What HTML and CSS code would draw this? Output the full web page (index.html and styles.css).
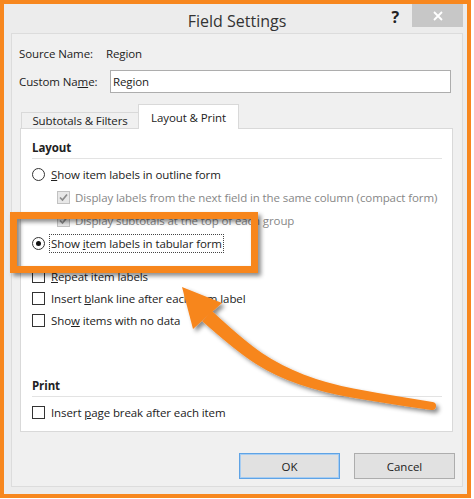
FILE: index.html
```html
<!DOCTYPE html>
<html>
<head>
<meta charset="utf-8">
<title>Field Settings</title>
<link rel="stylesheet" href="styles.css">
</head>
<body>
<div class="frame">
  <div class="titlebar">
    <div class="tb-left"></div>
    <div class="title">Field Settings</div>
    <div class="tb-right">
      <span class="help">?</span>
      <span class="close"><svg width="12" height="12" viewBox="0 0 12 12"><path d="M2 2 L10 10 M10 2 L2 10" stroke="#fff" stroke-width="1.8" fill="none"/></svg></span>
    </div>
  </div>
  <div class="client">
    <div class="row-source"><span class="lbl">Source Name:</span><span>Region</span></div>
    <div class="row-custom"><span class="lbl">Custom Na<u>m</u>e:</span><div class="input">Region</div></div>
    <div class="tabs">
      <div class="tab">Subtotals &amp; Filters</div>
      <div class="tab active">Layout &amp; Print</div>
    </div>
    <div class="panel">
      <div class="section-h">Layout</div>
      <div class="group group-a">
        <div class="opt"><span class="radio"></span><span><u>S</u>how item labels in outline form</span></div>
        <div class="opt indent disabled"><span class="check checked"><svg width="11" height="11" viewBox="0 0 11 11"><path d="M2 5.5 L4.5 8 L9 2.5" stroke="#8c8c8c" stroke-width="1.7" fill="none"/></svg></span><span>Display labels from the next field in the same column (compact form)</span></div>
        <div class="opt indent disabled"><span class="check checked"><svg width="11" height="11" viewBox="0 0 11 11"><path d="M2 5.5 L4.5 8 L9 2.5" stroke="#8c8c8c" stroke-width="1.7" fill="none"/></svg></span><span>Display subtotals at the top of each group</span></div>
        <div class="opt"><span class="radio on"></span><span class="focus">Show <u>i</u>tem labels in tabular form</span></div>
      </div>
      <div class="group group-b">
        <div class="opt"><span class="check"></span><span><u>R</u>epeat item labels</span></div>
        <div class="opt"><span class="check"></span><span>Insert <u>b</u>lank line after each item label</span></div>
        <div class="opt"><span class="check"></span><span>Sho<u>w</u> items with no data</span></div>
      </div>
      <div class="section-h print-h">Print</div>
      <div class="group group-c">
        <div class="opt"><span class="check"></span><span>Insert <u>p</u>age break after each item</span></div>
      </div>
    </div>
    <div class="buttons">
      <button class="btn default">OK</button>
      <button class="btn">Cancel</button>
    </div>
  </div>
</div>
<svg class="annot" width="474" height="499" viewBox="0 0 474 499">
  <defs>
    <filter id="sh" x="-10%" y="-10%" width="130%" height="140%">
      <feDropShadow dx="3" dy="3" stdDeviation="2" flood-color="#000" flood-opacity="0.45"/>
    </filter>
  </defs>
  <rect x="13.5" y="215.5" width="241" height="54" fill="none" stroke="#f7861e" stroke-width="7" filter="url(#sh)"/>
  <g fill="#f7861e" filter="url(#sh)">
    <path d="M211.7 310.8 Q244 340.9 262.3 353.3 Q280.6 365.6 303.5 374.4 Q326.3 383.2 353.5 388.4 Q380.7 393.6 406.7 397.8 L432.6 402 A4 4 0 0 1 431.4 410 L405.4 406.2 Q379.3 402.4 351.5 397.6 Q323.7 392.8 299.6 384.6 Q275.4 376.4 255.7 363.8 Q236 351.1 202.3 321.2 Z"/>
    <path d="M182 287 L222 303 L193 329 Z"/>
  </g>
</svg>
</body>
</html>
```

FILE: styles.css
```css
html, body {
  margin: 0;
  padding: 0;
}
body {
  width: 474px;
  height: 499px;
  background: #ffffff;
  position: relative;
  overflow: hidden;
  font-family: "Open Sans", "Noto Sans", "Liberation Sans", sans-serif;
  font-size: 11.5px;
  letter-spacing: -0.1px;
  color: #222;
}
.frame {
  width: 471px;
  height: 498px;
  box-sizing: border-box;
  border: 4px solid #f7871e;
  background: #ececec;
  display: flex;
  flex-direction: column;
}
.titlebar {
  height: 29px;
  display: grid;
  grid-template-columns: 1fr auto 1fr;
  flex: none;
}
.title {
  font-size: 16px;
  letter-spacing: 0;
  color: #333;
  line-height: 20px;
  padding-top: 7px;
  padding-left: 3px;
}
.tb-right {
  display: flex;
  justify-content: flex-end;
  align-items: flex-start;
  padding-right: 4px;
}
.help {
  font-weight: bold;
  font-size: 16px;
  line-height: 18px;
  margin-top: 4px;
  margin-right: 13px;
  color: #222;
}
.close {
  width: 51px;
  height: 23px;
  background: #c7c7c7;
  display: flex;
  align-items: center;
  justify-content: center;
}
.client {
  flex: none;
  height: 454px;
  box-sizing: border-box;
  margin: 0 4px 0 7px;
  border: 1px solid #dcdcdc;
  background: #f0f0f0;
  padding: 12px 0 0 7px;
  display: flex;
  flex-direction: column;
}
.row-source {
  display: flex;
  line-height: 16px;
  height: 16px;
}
.lbl {
  width: 87px;
  flex: none;
}
.row-custom {
  margin-top: 8px;
  display: flex;
  align-items: center;
  height: 23px;
}
.row-custom .lbl {
  width: 91px;
}
.input {
  width: 341px;
  height: 23px;
  box-sizing: border-box;
  border: 1px solid #adadad;
  background: #fff;
  padding-left: 2px;
  line-height: 21px;
}
.tabs {
  margin-top: 11px;
  margin-left: 2px;
  height: 25px;
  margin-bottom: -1px;
  display: flex;
  align-items: flex-end;
  position: relative;
  z-index: 1;
}
.tab {
  width: 117px;
  height: 17px;
  box-sizing: border-box;
  border: 1px solid #d9d9d9;
  border-right: none;
  background: #f0f0f0;
  text-align: center;
  line-height: 15px;
}
.tab.active {
  width: 101px;
  height: 25px;
  border: 1px solid #d9d9d9;
  border-bottom: none;
  background: #fff;
  line-height: 26px;
}
.panel {
  margin-left: 1px;
  width: 433px;
  height: 304px;
  box-sizing: border-box;
  border: 1px solid #d9d9d9;
  background: #fff;
  padding: 11px 10px 0 11px;
}
.section-h {
  font-weight: bold;
  line-height: 16px;
  padding-bottom: 2px;
  border-bottom: 1px solid #e3e3e3;
}
.print-h {
  margin-top: 47px;
}
.group {
  display: flex;
  flex-direction: column;
}
.group-a {
  margin-top: 4px;
  gap: 1px;
}
.group-b {
  margin-top: 11px;
}
.group-c {
  margin-top: 4px;
}
.opt {
  height: 22px;
  display: flex;
  align-items: center;
  white-space: nowrap;
}
.indent {
  padding-left: 25px;
}
.disabled {
  color: #878787;
}
.radio {
  width: 13px;
  height: 13px;
  box-sizing: border-box;
  border: 1px solid #333;
  border-radius: 50%;
  background: #fff;
  margin-right: 6px;
  flex: none;
  display: flex;
  align-items: center;
  justify-content: center;
}
.radio.on::after {
  content: "";
  width: 5px;
  height: 5px;
  border-radius: 50%;
  background: #111;
}
.check {
  width: 13px;
  height: 13px;
  box-sizing: border-box;
  border: 1px solid #333;
  background: #fff;
  margin-right: 6px;
  flex: none;
  display: flex;
  align-items: center;
  justify-content: center;
}
.disabled .check {
  border-color: #c2c2c2;
  background: #e8e8e8;
  margin-right: 5px;
}
.focus {
  border: 1px dotted #444;
  padding: 1px 1px;
  margin-left: -2px;
  line-height: 15px;
}
.buttons {
  margin-top: 21px;
  display: flex;
  justify-content: flex-end;
  gap: 14px;
  padding-right: 7px;
}
.btn {
  width: 101px;
  height: 26px;
  box-sizing: border-box;
  border: 1px solid #adadad;
  background: #e1e1e1;
  font-family: inherit;
  font-size: 11.5px;
  color: #222;
  padding: 0;
}
.btn.default {
  border: 1px solid #5fa3e5;
  box-shadow: inset 0 0 0 1px #a7cdf2;
}
.annot {
  position: absolute;
  left: 0;
  top: 0;
  pointer-events: none;
}
```
